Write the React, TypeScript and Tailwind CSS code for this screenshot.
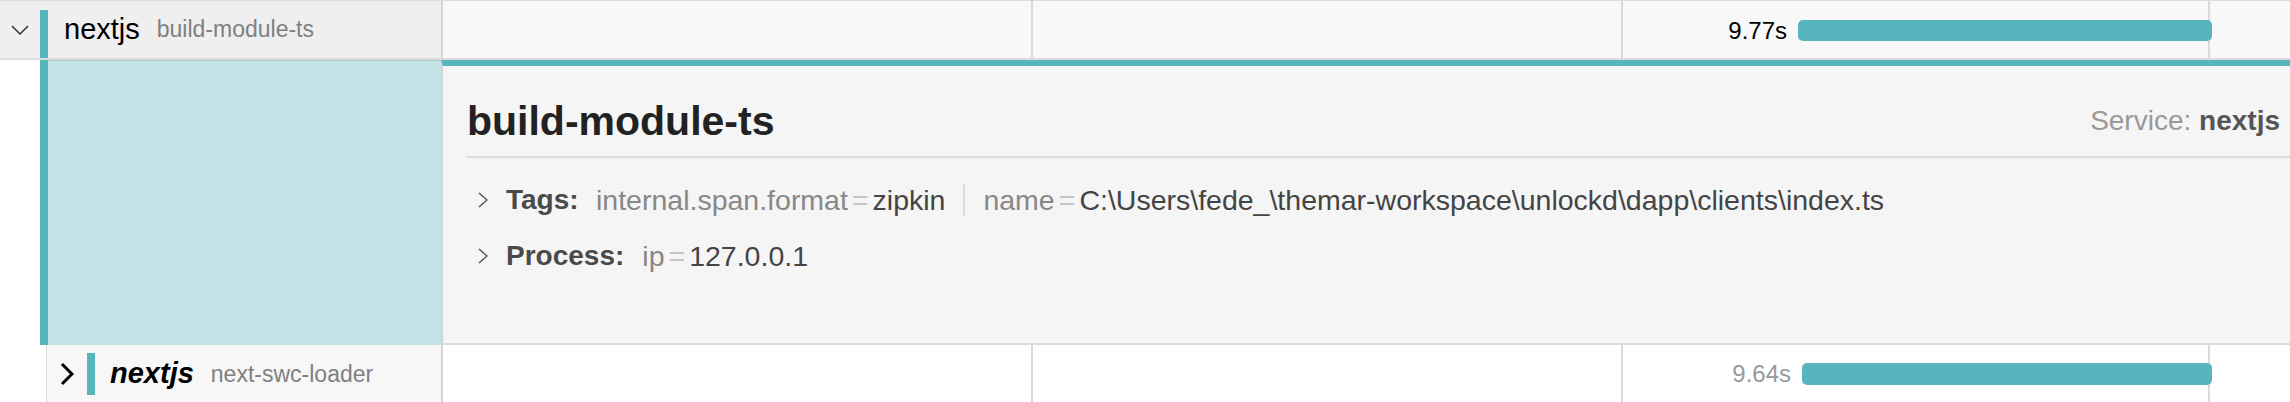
const TEAL = 'bg-[#56b5bd]'

function ChevronDown() {
  return (
    <svg width="18" height="10" viewBox="0 0 18 10" fill="none">
      <path d="M1 1L9 9L17 1" stroke="#333" strokeWidth="1.5" />
    </svg>
  )
}

function ChevronRight({ bold }: { bold?: boolean }) {
  if (bold) {
    return (
      <svg width="14" height="24" viewBox="0 0 14 24" fill="none">
        <path d="M2 2L12 12L2 22" stroke="#000" strokeWidth="3" />
      </svg>
    )
  }
  return (
    <svg width="10" height="16" viewBox="0 0 10 16" fill="none">
      <path d="M1 1L9 8L1 15" stroke="#555" strokeWidth="1.5" />
    </svg>
  )
}

// vertical grid lines of the timeline, offsets from the timeline's left edge
function Ticks() {
  return (
    <>
      <div className="absolute top-0 bottom-0 left-[588px] w-[2px] bg-[#dadada]" />
      <div className="absolute top-0 bottom-0 left-[1178px] w-[2px] bg-[#dadada]" />
      <div className="absolute top-0 bottom-0 left-[1765px] w-[2px] bg-[#dadada]" />
    </>
  )
}

function KeyValue({ k, v }: { k: string; v: string }) {
  return (
    <span className="flex items-center text-[28.5px]">
      <span className="text-[#888]">{k}</span>
      <span className="mx-[4px] text-[#c4c4c4]">=</span>
      <span className="text-[#444]">{v}</span>
    </span>
  )
}

export default function App() {
  return (
    <div className="w-[2290px] h-[402px] overflow-hidden bg-white font-['Liberation_Sans',Arial,sans-serif]">
      {/* span row: nextjs build-module-ts (expanded) */}
      <div className="flex h-[60px] border-t border-b-2 border-[#dcdcdc]">
        <div className="flex w-[443px] shrink-0 bg-[#efefef] border-r-2 border-[#d6d6d6]">
          <div className="flex w-[40px] items-center justify-center">
            <ChevronDown />
          </div>
          <div className={`w-[8px] mt-[9px] ${TEAL}`} />
          <div className="flex items-center pl-4">
            <span className="text-[29px] text-black">nextjs</span>
            <span className="ml-[17px] text-[23px] text-[#808080]">build-module-ts</span>
          </div>
        </div>
        <div className="relative flex-1 bg-[#f8f8f8]">
          <Ticks />
          <div className={`absolute left-[1355px] top-[19px] h-[21px] w-[414px] rounded-[5px] ${TEAL}`}>
            <span className="absolute right-full mr-[11px] top-1/2 -translate-y-1/2 text-[24px] text-black leading-none">
              9.77s
            </span>
          </div>
        </div>
      </div>

      {/* detail row */}
      <div className="flex h-[285px]">
        <div className="flex w-[441px] shrink-0">
          <div className="w-[40px] bg-white" />
          <div className={`w-[8px] ${TEAL}`} />
          <div className="flex-1 bg-[#c4e4e7] border-t border-[#a9d0d4]" />
        </div>
        <div className="flex-1 min-w-0 bg-[#f5f5f5] border-t-[6px] border-t-[#56b5bd] border-l-2 border-l-[#d2d2d2] border-b-2 border-b-[#dcdcdc] pl-[24px]">
          <div className="flex items-center justify-between h-[92px] pt-[20px] pr-[10px] border-b-2 border-[#dddddd]">
            <h2 className="text-[41px] font-bold text-[#222] leading-none">build-module-ts</h2>
            <div className="text-[28px] leading-none">
              <span className="text-[#999]">Service: </span>
              <span className="font-bold text-[#555]">nextjs</span>
            </div>
          </div>

          <div className="flex items-center h-[38px] mt-[23px] text-[28px] leading-none">
            <span className="ml-[11px] mr-[18px]">
              <ChevronRight />
            </span>
            <span className="w-[90px] font-bold text-[#4a4a4a]">Tags:</span>
            <KeyValue k="internal.span.format" v="zipkin" />
            <span className="mx-[18px] h-[32px] w-[2px] bg-[#dddddd]" />
            <KeyValue k="name" v={'C:\\Users\\fede_\\themar-workspace\\unlockd\\dapp\\clients\\index.ts'} />
          </div>

          <div className="flex items-center h-[38px] mt-[18px] text-[28px] leading-none">
            <span className="ml-[11px] mr-[18px]">
              <ChevronRight />
            </span>
            <span className="mr-[18px] font-bold text-[#4a4a4a]">Process:</span>
            <KeyValue k="ip" v="127.0.0.1" />
          </div>
        </div>
      </div>

      {/* span row: nextjs next-swc-loader */}
      <div className="flex h-[58px]">
        <div className="w-[46px] shrink-0 bg-white" />
        <div className="flex w-[397px] shrink-0 items-start bg-[#f7f7f7] border-l border-r-2 border-l-[#dddddd] border-r-[#d6d6d6]">
          <div className="flex w-[40px] h-[42px] mt-[8px] items-center justify-center">
            <ChevronRight bold />
          </div>
          <div className={`w-[8px] h-[42px] mt-[8px] ${TEAL}`} />
          <div className="flex h-[42px] mt-[8px] items-center pl-[15px]">
            <span className="text-[29px] font-bold italic text-black">nextjs</span>
            <span className="ml-[17px] text-[23px] text-[#808080]">next-swc-loader</span>
          </div>
        </div>
        <div className="relative flex-1 bg-white">
          <Ticks />
          <div className={`absolute left-[1359px] top-[18px] h-[22px] w-[410px] rounded-[5px] ${TEAL}`}>
            <span className="absolute right-full mr-[11px] top-1/2 -translate-y-1/2 text-[24px] text-[#999] leading-none">
              9.64s
            </span>
          </div>
        </div>
      </div>
    </div>
  )
}
